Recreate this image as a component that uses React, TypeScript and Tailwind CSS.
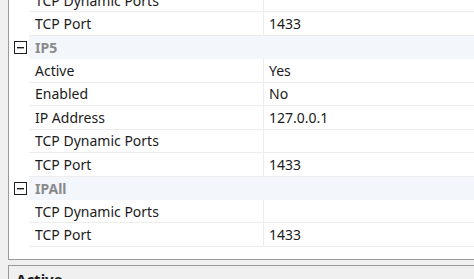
import { Fragment } from 'react';

type Row = { name: string; value?: string; category?: boolean };

const rows: Row[] = [
    { name: 'TCP Dynamic Ports', value: '' },
    { name: 'TCP Port', value: '1433' },
    { name: 'IP5', category: true },
    { name: 'Active', value: 'Yes' },
    { name: 'Enabled', value: 'No' },
    { name: 'IP Address', value: '127.0.0.1' },
    { name: 'TCP Dynamic Ports', value: '' },
    { name: 'TCP Port', value: '1433' },
    { name: 'IPAll', category: true },
    { name: 'TCP Dynamic Ports', value: '' },
    { name: 'TCP Port', value: '1433' },
];

function MinusBox() {
    return (
        <svg width="13" height="13" viewBox="0 0 13 13" className="block">
            <rect x="0.5" y="0.5" width="12" height="12" fill="#fff" stroke="#1e1e1e" />
            <rect x="3" y="6" width="7" height="1.4" fill="#1e1e1e" />
        </svg>
    );
}

export default function App() {
    return (
        <div
            className="w-[474px] h-[279px] overflow-hidden bg-[#f0f0f0] pl-[8px] text-[14px] text-[#1b1b1b]"
            style={{ fontFamily: '"Noto Sans", "Open Sans", sans-serif' }}
        >
            {/* property grid */}
            <div className="h-[260px] border-l border-b border-[#9a9a9a] bg-white overflow-hidden">
                <div className="-mt-[11px]">
                    {rows.map((row, i) => (
                        <Fragment key={i}>
                            {row.category ? (
                                <div className="flex h-[23.45px]">
                                    <div className="w-[20px] flex items-center justify-center pl-[3px]">
                                        <MinusBox />
                                    </div>
                                    <div className="flex-1 bg-[#f3f6fb] flex items-center pl-[6px] font-bold text-[#8a8a8a]">
                                        {row.name}
                                    </div>
                                </div>
                            ) : (
                                <div className="flex h-[23.45px]">
                                    <div className="w-[20px]" />
                                    <div className="flex-1 flex border-b border-[#ededed]">
                                        <div className="w-[235px] flex items-center pl-[6px] border-r border-[#ededed]">
                                            {row.name}
                                        </div>
                                        <div className="flex-1 flex items-center pl-[5px]">{row.value}</div>
                                    </div>
                                </div>
                            )}
                        </Fragment>
                    ))}
                </div>
            </div>
            {/* description panel */}
            <div className="mt-[5px] h-[20px] border-l border-t border-[#9a9a9a] bg-[#f0f0f0] pl-[7px] pt-[6px] text-[15px] font-bold leading-none">
                Active
            </div>
        </div>
    );
}
